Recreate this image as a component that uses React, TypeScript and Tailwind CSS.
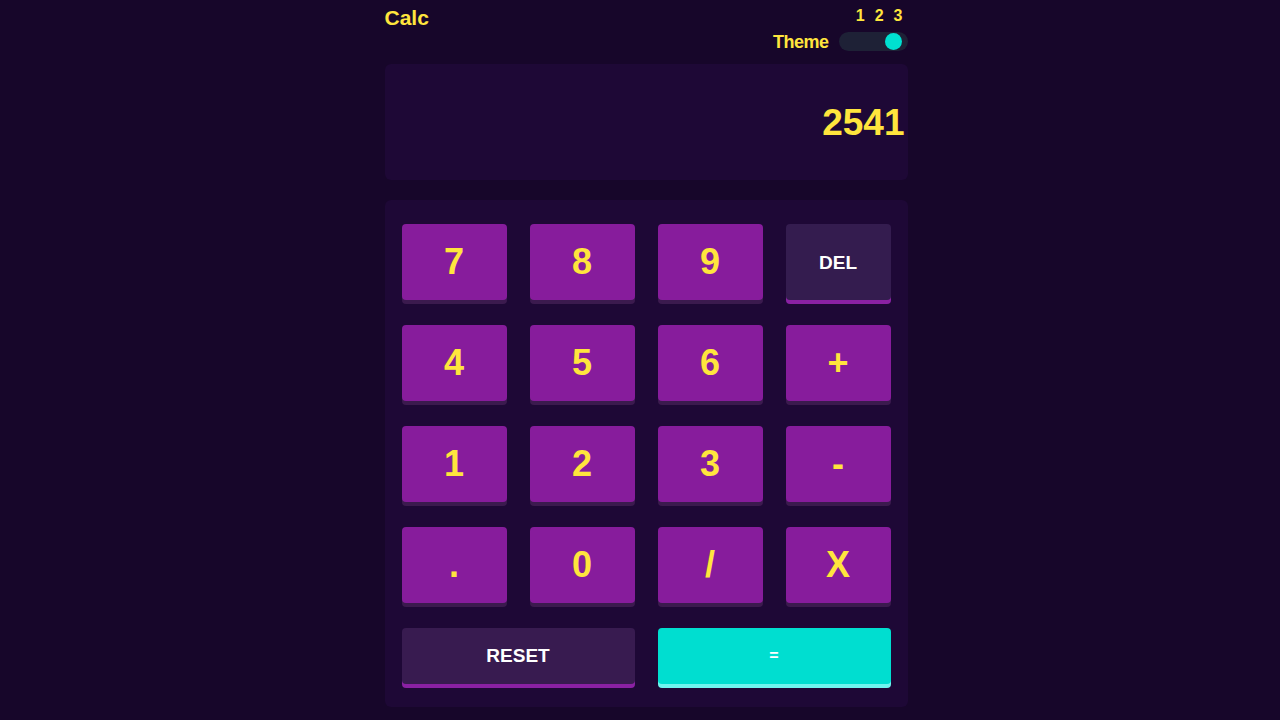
const digitKey = "bg-[#871c9c] text-[#ffe53d] text-[36px] shadow-[0_4px_0_#3b1a4e]";
const fnKey = "bg-[#341c4f] text-white text-[19px] shadow-[0_4px_0_#8a21a3]";

const rows: string[][] = [
  ["7", "8", "9", "DEL"],
  ["4", "5", "6", "+"],
  ["1", "2", "3", "-"],
  [".", "0", "/", "X"],
];

function Key({ label }: { label: string }) {
  const isFn = label === "DEL";
  return (
    <button className={`h-[76px] rounded-[4px] font-bold leading-none ${isFn ? fnKey : digitKey}`}>
      {label}
    </button>
  );
}

export default function App() {
  return (
    <div
      className="min-h-[720px] w-full bg-[#17062a] pl-[12px]"
      style={{ fontFamily: '"Liberation Sans", Arial, sans-serif' }}
    >
      <div className="mx-auto flex w-[523px] flex-col pt-[5px]">
        <header className="flex items-start justify-between">
          <h1 className="mt-[1px] text-[21px] font-bold leading-[24px] text-[#ffe53d]">Calc</h1>
          <div className="flex flex-col items-end">
            <div className="mr-[5px] mt-[1px] flex gap-[10px] text-[16px] font-bold leading-[20px] text-[#ffe53d]">
              <span>1</span>
              <span>2</span>
              <span>3</span>
            </div>
            <div className="mt-[1px] flex items-center gap-[10px]">
              <span className="mt-[2px] text-[18px] font-bold tracking-[-0.5px] text-[#ffe53d]">Theme</span>
              <div className="flex h-[19px] w-[69px] items-center justify-end rounded-full bg-[#1e2136] px-[6px]">
                <span className="h-[17px] w-[17px] rounded-full bg-[#00e0d1]" />
              </div>
            </div>
          </div>
        </header>

        <section className="mt-[8px] flex h-[116px] items-center justify-end rounded-[6px] bg-[#1e0836] pr-[3px]">
          <span className="text-[37px] font-bold leading-none text-[#ffe53d]">2541</span>
        </section>

        <section className="mt-[20px] rounded-[6px] bg-[#1e0836] px-[17px] pb-[23px] pt-[24px]">
          <div className="grid grid-cols-4 gap-x-[23px] gap-y-[25px]">
            {rows.flat().map((k) => (
              <Key key={k} label={k} />
            ))}
          </div>
          <div className="mt-[25px] grid grid-cols-2 gap-x-[23px]">
            <button className="h-[56px] rounded-[4px] bg-[#381b50] text-[19px] font-bold text-white shadow-[0_4px_0_#8a21a3]">
              RESET
            </button>
            <button className="h-[56px] rounded-[4px] bg-[#00ded0] text-[16px] font-bold text-white shadow-[0_4px_0_#6ff5ef]">
              =
            </button>
          </div>
        </section>
      </div>
    </div>
  );
}
